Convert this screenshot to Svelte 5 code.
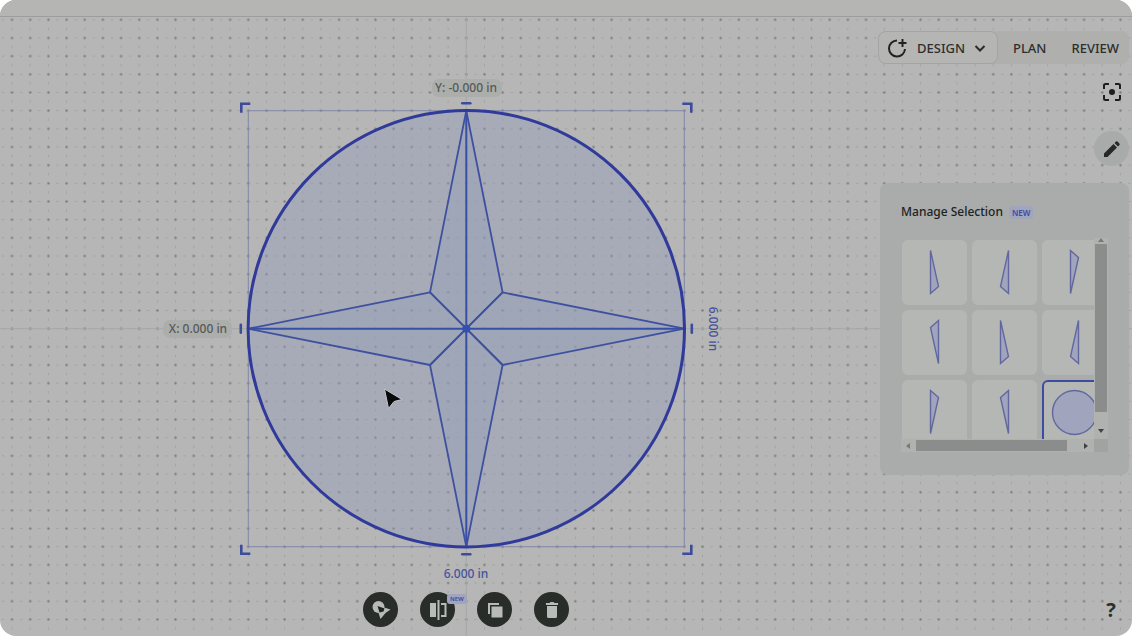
<script>
  const shapes = [
    '28.5,10.5 36.5,46.5 28.5,53.5',
    '36.5,10.5 28.5,46.5 36.5,53.5',
    '28.5,10.5 36.5,17.5 28.5,53.5',
    '36.5,10.5 28.5,17.5 36.5,53.5'
  ];
  const cells = [0, 1, 2, 3, 0, 1, 2, 3, null];
  let selected = $state(8);
  const rays = [0, 90, 180, 270];
  const corners = [[-226, -226, 0], [226, -226, 90], [226, 226, 180], [-226, 226, 270]];
</script>

<div class="app">
  <svg class="canvas" viewBox="0 0 1132 636" preserveAspectRatio="xMidYMid slice" role="img" aria-label="Design canvas">
    <defs>
      <pattern id="grid" x="457.2" y="319.6" width="18.17" height="18.17" patternUnits="userSpaceOnUse">
        <circle cx="9.1" cy="9.1" r="1.7" fill="#858886" opacity=".3" />
        <circle cx="9.1" cy="9.1" r="1" fill="#717573" />
        <path d="M0 9.1h1.2M17 9.1h1.2M9.1 0v1.2M9.1 17v1.2" stroke="#a0a3a1" stroke-width="1" />
      </pattern>
    </defs>
    <rect width="1132" height="636" fill="url(#grid)" />
    <path d="M466.3 0V636M0 328.7H1132" stroke="#a6a9a7" stroke-width="1" />
    <g transform="translate(466.3 328.7)">
      <circle r="218.2" fill="#9499bb" fill-opacity=".4" />
      <rect x="-218" y="-218" width="436" height="436" fill="none" stroke="#8289a8" stroke-width="1" />
      {#each rays as angle}
        <g transform="rotate({angle})" stroke="#3f50a0" stroke-width="1.8" stroke-linejoin="round">
          <path d="M0 0L-36.3-36.3 0-218 36.3-36.3Z" fill="#929fb8" fill-opacity=".4" />
          <path d="M0 0V-218" stroke="#384fa6" stroke-width="2" />
          <path d="M-4-225.500H4" stroke="#3c4b9b" stroke-width="2.6" stroke-linecap="round" />
        </g>
      {/each}
      <circle r="218.2" fill="none" stroke="#2f3a9a" stroke-width="3" />
      <circle r="4" fill="#3450ae" />
      {#each corners as [x, y, angle]}
        <path transform="translate({x} {y}) rotate({angle})" d="M1 10V1H10" fill="none" stroke="#3c4b9b" stroke-width="2.6" />
      {/each}
    </g>
    <rect x="432" y="79" width="70" height="18" rx="7" fill="#acaeac" />
    <rect x="163" y="320" width="69" height="18" rx="7" fill="#acaeac" />
    <g class="measure" text-anchor="middle">
      <text x="466" y="92">Y: -0.000 in</text>
      <text x="198" y="333">X: 0.000 in</text>
      <text class="size" x="466" y="578">6.000 in</text>
      <text class="size" transform="translate(709 329) rotate(90)">6.000 in</text>
    </g>
    <path d="M384.500 389L402 399.500 394 401.500 388.500 408.500Z" fill="#08090b" stroke="#c3c4c8" stroke-width="1" />
  </svg>

  <header class="topbar"></header>

  <main>
    <aside>
      <nav class="modes" aria-label="Modes">
        <button class="mode active">
          <svg width="20" height="20" viewBox="0 0 20 20" fill="none" stroke="#202321" stroke-width="2">
            <path d="M9 2.500A8 8 0 1 0 17 11" /><path d="M14.500 1V9M10.500 5H18.500" />
          </svg>
          <span>DESIGN</span>
          <svg width="12" height="12" viewBox="0 0 12 12" fill="none" stroke="#292c2a" stroke-width="2"><path d="M1.500 4L6 8.500 10.500 4" /></svg>
        </button>
        <button class="mode">PLAN</button>
        <button class="mode">REVIEW</button>
      </nav>
      <button class="tool" aria-label="Zoom to fit">
        <svg width="18" height="18" viewBox="0 0 18 18" fill="none" stroke="#1c1f1d" stroke-width="2">
          <path d="M1 6V2.500Q1 1 2.500 1H6M12 1H15.500Q17 1 17 2.500V6M17 12V15.500Q17 17 15.500 17H12M6 17H2.500Q1 17 1 15.500V12" />
          <circle cx="9" cy="9" r="3" fill="#1c1f1d" stroke="none" />
        </svg>
      </button>
      <button class="tool edit" aria-label="Edit">
        <svg width="16" height="16" viewBox="0 0 16 16" fill="#252927"><path d="M0 16V12.500L9.500 3 13 6.500 3.500 16ZM10.500 2L12 .5Q13 0 13.800.8L15.200 2.200Q16 3 15.500 4L14 5.500Z" /></svg>
      </button>

      <section class="panel">
        <div class="title"><h2>Manage Selection</h2><span class="new">NEW</span></div>
        <div class="scroller">
          <div class="view">
            <div class="cells">
              {#each cells as shape, i}
                <button class="cell" class:selected={selected === i} aria-label="Shape {i + 1}" onclick={() => (selected = i)}>
                  <svg width="65" height="65" viewBox="0 0 65 65" fill="#a0a4bd" stroke="#6267a0" stroke-width="1.4">
                    {#if shape === null}
                      <circle cx="32.500" cy="32.500" r="22" />
                    {:else}
                      <polygon points={shapes[shape]} />
                    {/if}
                  </svg>
                </button>
              {/each}
            </div>
          </div>
          <div class="bar vertical">
            <svg width="6" height="4" viewBox="0 0 6 4"><path d="M0 4L3 0 6 4Z" fill="#777a78" /></svg>
            <i class="thumb"></i>
            <svg class="end" width="6" height="4" viewBox="0 0 6 4"><path d="M0 0H6L3 4Z" fill="#3f4240" /></svg>
          </div>
          <div class="bar horizontal">
            <svg width="4" height="6" viewBox="0 0 4 6"><path d="M4 0V6L0 3Z" fill="#777a78" /></svg>
            <i class="thumb"></i>
            <svg class="end" width="4" height="6" viewBox="0 0 4 6"><path d="M0 0V6L4 3Z" fill="#3f4240" /></svg>
          </div>
          <div class="corner"></div>
        </div>
      </section>
    </aside>

    <footer>
      <div class="actions">
        <button class="action" aria-label="Combine shapes">
          <svg width="20" height="20" viewBox="0 0 20 20">
            <circle cx="7.500" cy="7" r="6" fill="#b9bbb9" />
            <path d="M5 5L19.500 9.500 14.500 13 9.500 19Z" fill="#b9bbb9" />
            <path d="M6.500 6L13.500 8.500 12.500 11.500 8.500 12.500Z" fill="#202321" />
          </svg>
        </button>
        <button class="action" aria-label="Mirror">
          <svg width="18" height="20" viewBox="0 0 18 20" fill="#b9bbb9"><path d="M1 3H7V17H1ZM8.500 0H10.500V20H8.500ZM12 3H17.500V17H12V15H15.500V5H12Z" /></svg>
          <span class="new small">NEW</span>
        </button>
        <button class="action" aria-label="Duplicate">
          <svg width="16" height="16" viewBox="0 0 16 16" fill="#b9bbb9"><path d="M1 1H12V3H3V12H1ZM4.500 4.500H15.500V15.500H4.500Z" /></svg>
        </button>
        <button class="action" aria-label="Delete">
          <svg width="14" height="18" viewBox="0 0 14 18" fill="#b9bbb9"><path d="M1 2H4.500L5.500 1H8.500L9.500 2H13V4H1ZM2 5H12V15.500Q12 17 10.500 17H3.500Q2 17 2 15.500Z" /></svg>
        </button>
      </div>
      <button class="help" aria-label="Help">?</button>
    </footer>
  </main>
</div>

<style>
  :global(body) { margin: 0; background: #fff; }
  .app {
    position: relative;
    display: flex;
    flex-direction: column;
    min-height: 100vh;
    overflow: hidden;
    border-radius: 16px;
    background: #b5b6b5;
    color: #2c2f2d;
    font-family: "Noto Sans", sans-serif;
  }
  .app * { box-sizing: border-box; }
  button { margin: 0; padding: 0; border: 0; background: none; color: inherit; font: inherit; cursor: pointer; }
  svg { display: block; flex: none; }
  .canvas { position: absolute; inset: 0; width: 100%; height: 100%; }
  .measure { font-size: 12px; font-weight: 500; fill: #555957; }
  .measure .size { fill: #4552a0; }
  .topbar { position: relative; height: 17px; background: #b5b6b4; border-bottom: 1px solid #9b9e9c; }
  main { position: relative; flex: 1; display: flex; flex-direction: column; justify-content: space-between; }
  aside { display: flex; flex-direction: column; align-items: flex-end; padding: 14px 3px 0 0; }
  .modes { display: flex; height: 33px; border-radius: 8px; background: #afb0ae; }
  .mode { padding: 0 10px 0 15px; font-size: 13px; font-weight: 500; }
  .mode.active { display: flex; align-items: center; gap: 9px; width: 120px; padding: 0 9px; border: 1px solid #a2a5a3; border-radius: 8px; background: #b5b6b4; }
  .tool { display: grid; place-items: center; width: 35px; height: 35px; margin-top: 10px; border-radius: 50%; }
  .tool.edit { margin-top: 22px; background: #a8abaa; }
  .panel { width: 249px; height: 292px; margin-top: 17px; padding: 20px 21px; border-radius: 8px; background: #a9acab; }
  .title { display: flex; align-items: center; gap: 6px; height: 18px; }
  h2 { margin: 0; font-size: 12px; font-weight: 500; line-height: 18px; color: #202321; }
  .new { padding: 0 3px; border-radius: 3px; background: #a0a5bd; color: #3d48a0; font-size: 8px; font-weight: 600; line-height: 13px; }
  .scroller { display: grid; grid-template-columns: 193px 14px; grid-template-rows: 201px 13px; margin-top: 17px; }
  .view { overflow: hidden; padding: 2px 0 0 1px; }
  .cells { display: grid; grid-template-columns: repeat(3, 65px); gap: 5px; width: 205px; }
  .cell { width: 65px; height: 65px; border-radius: 6px; background: #b5b7b5; }
  .cell.selected { box-shadow: inset 0 0 0 2px #3d4ca0; }
  .bar { display: flex; align-items: center; }
  .vertical { flex-direction: column; background: #b0b2b0; }
  .vertical .thumb { width: 12px; height: 168px; margin-top: 2px; background: #8a8d8b; }
  .vertical .end { margin: auto 0 6px; }
  .horizontal { padding-left: 5px; background: #b0b2b0; }
  .horizontal .thumb { width: 151px; height: 11px; margin-left: 6px; background: #8a8d8b; }
  .horizontal .end { margin: 0 6px 0 auto; }
  .corner { background: #a1a3a2; }
  footer { display: flex; align-items: center; padding: 0 12px 9px 0; }
  .actions { display: flex; flex: 1; justify-content: center; gap: 22px; margin: 0 170px 0 0; }
  .action { position: relative; display: grid; place-items: center; width: 35px; height: 35px; border-radius: 50%; background: #292d2a; }
  .small { position: absolute; top: 2px; left: 27px; padding: 0 3px; font-size: 6px; line-height: 10px; }
  .help { width: 18px; font-size: 20px; font-weight: 700; line-height: 24px; }
</style>
